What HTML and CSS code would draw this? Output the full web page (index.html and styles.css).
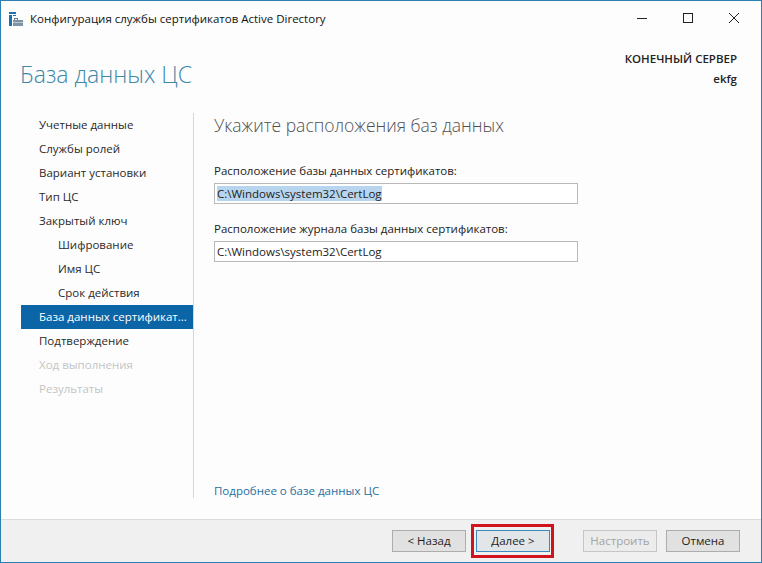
FILE: index.html
```html
<!DOCTYPE html>
<html lang="ru">

<head>
    <meta charset="UTF-8">
    <title>Конфигурация службы сертификатов Active Directory</title>
    <link rel="stylesheet" href="styles.css">
</head>

<body>
    <div class="window">
        <div class="titlebar">
            <svg class="app-icon" width="14" height="14" viewBox="0 0 14 14">
                <rect x="0" y="0" width="7" height="2" fill="#1f6fb5"/>
                <rect x="0" y="3" width="3" height="11" fill="#1f6fb5"/>
                <rect x="4" y="3" width="3" height="1" fill="#1f6fb5"/>
                <rect x="5.5" y="6.5" width="3" height="2" fill="none" stroke="#6b7f91" stroke-width="1"/>
                <rect x="4" y="8" width="10" height="6" fill="#7f93a6"/>
                <rect x="4" y="10" width="10" height="1" fill="#b7c4d0"/>
            </svg>
            <span class="title-text">Конфигурация службы сертификатов Active Directory</span>
            <div class="controls">
                <svg width="46" height="20" viewBox="0 0 46 20"><path d="M18 10.5h10" stroke="#222" stroke-width="1"/></svg>
                <svg width="46" height="20" viewBox="0 0 46 20"><rect x="18.5" y="5.5" width="9" height="9" fill="none" stroke="#222" stroke-width="1"/></svg>
                <svg width="46" height="20" viewBox="0 0 46 20"><path d="M18 5l10 10M28 5l-10 10" stroke="#222" stroke-width="1"/></svg>
            </div>
        </div>

        <div class="header">
            <h1>База данных ЦС</h1>
            <div class="server">
                <div class="server-label">КОНЕЧНЫЙ СЕРВЕР</div>
                <div class="server-name">ekfg</div>
            </div>
        </div>

        <div class="main">
            <ul class="nav">
                <li>Учетные данные</li>
                <li>Службы ролей</li>
                <li>Вариант установки</li>
                <li>Тип ЦС</li>
                <li>Закрытый ключ</li>
                <li class="sub">Шифрование</li>
                <li class="sub">Имя ЦС</li>
                <li class="sub">Срок действия</li>
                <li class="active">База данных сертификат...</li>
                <li>Подтверждение</li>
                <li class="disabled">Ход выполнения</li>
                <li class="disabled">Результаты</li>
            </ul>

            <div class="content">
                <h2>Укажите расположения баз данных</h2>
                <label class="field-label first" for="dbPath">Расположение базы данных сертификатов:</label>
                <div class="field"><span class="selected-text">C:\Windows\system32\CertLog</span></div>
                <label class="field-label" for="logPath">Расположение журнала базы данных сертификатов:</label>
                <div class="field">C:\Windows\system32\CertLog</div>
                <a href="#" class="more-link">Подробнее о базе данных ЦС</a>
            </div>
        </div>

        <div class="footer">
            <button class="btn">&lt; Назад</button>
            <span class="highlight"><button class="btn btn-default">Далее &gt;</button></span>
            <button class="btn btn-disabled">Настроить</button>
            <button class="btn btn-cancel">Отмена</button>
        </div>
    </div>
</body>

</html>
```

FILE: styles.css
```css
html,
body {
    margin: 0;
    padding: 0;
    height: 100%;
}

body {
    font-family: "Open Sans", "Noto Sans", sans-serif;
    font-size: 11.5px;
    color: #1e1e1e;
    background-color: #fdfdfd;
}

.window {
    height: 563px;
    box-sizing: border-box;
    border: 1px solid #2a7fb3;
    display: flex;
    flex-direction: column;
    background-color: #fdfdfd;
}

.titlebar {
    height: 34px;
    display: flex;
    align-items: center;
    flex-shrink: 0;
}

.app-icon {
    margin-left: 8px;
    margin-top: 1px;
}

.title-text {
    margin-left: 7px;
    font-size: 11.5px;
    color: #111;
}

.controls {
    margin-left: auto;
    display: flex;
    margin-right: 4px;
}

.controls svg {
    display: block;
}

.header {
    height: 78px;
    flex-shrink: 0;
    display: flex;
    justify-content: space-between;
}

h1 {
    margin: 24px 0 0 19px;
    font-size: 23px;
    font-weight: 300;
    line-height: 30px;
    color: #3b88a7;
}

.server {
    margin: 14px 24px 0 0;
    text-align: right;
    line-height: 20px;
    color: #222;
}

.server-label,
.server-name {
    font-weight: 600;
    font-size: 11.5px;
}

.main {
    flex: 1;
    display: flex;
    min-height: 0;
}

.nav {
    list-style: none;
    margin: 0 0 21px 0;
    padding: 0 0 0 20px;
    width: 172px;
    border-right: 1px solid #d6d6d6;
}

.nav li {
    height: 24px;
    line-height: 24px;
    padding-left: 18px;
    white-space: nowrap;
    color: #2a2a2a;
}

.nav li.sub {
    padding-left: 37px;
}

.nav li.active {
    background-color: #0b65a6;
    color: #fff;
}

.nav li.disabled {
    color: #c4c4c4;
}

.content {
    flex: 1;
    display: flex;
    flex-direction: column;
    padding: 0 0 20px 20px;
}

h2 {
    margin: 0;
    font-size: 17.5px;
    font-weight: 300;
    line-height: 24px;
    color: #505050;
}

.field-label {
    display: block;
    line-height: 16px;
    margin-top: 17px;
    color: #222;
}

.field-label.first {
    margin-top: 26px;
}

.field {
    margin-top: 4px;
    width: 364px;
    height: 21px;
    box-sizing: border-box;
    border: 1px solid #b9b9b9;
    background-color: #fff;
    line-height: 19px;
    padding-left: 2px;
    color: #222;
    white-space: nowrap;
}

.selected-text {
    background-color: #b7d5ee;
}

.more-link {
    margin-top: auto;
    line-height: 16px;
    color: #1f6f9f;
    text-decoration: none;
}

.footer {
    flex-shrink: 0;
    border-top: 1px solid #dcdcdc;
    background-color: #f0f0f0;
    display: flex;
    align-items: flex-start;
    justify-content: flex-end;
    padding: 10px 21px 0 0;
    box-sizing: border-box;
    height: 43px;
}

.btn {
    width: 74px;
    height: 22px;
    box-sizing: border-box;
    border: 1px solid #adadad;
    background-color: #e1e1e1;
    font-family: "Open Sans", "Noto Sans", sans-serif;
    font-size: 11.5px;
    color: #1e1e1e;
    padding: 0;
    line-height: 20px;
}

.highlight {
    position: relative;
    margin-left: 10px;
    display: block;
}

.highlight::after {
    content: "";
    position: absolute;
    top: -6px;
    bottom: -6px;
    left: -5px;
    right: -4px;
    border: 3px solid #d0131d;
}

.btn-default {
    display: block;
    border-color: #3c88c0;
    background-color: #e3e6e8;
}

.btn-disabled {
    margin-left: 33px;
    border-color: #c6c6c6;
    background-color: #ececec;
    color: #a3a3a3;
}

.btn-cancel {
    margin-left: 9px;
}
```
